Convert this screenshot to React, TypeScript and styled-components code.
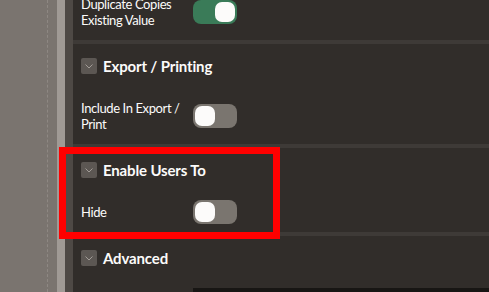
import React from "react";
import styled, { createGlobalStyle } from "styled-components";

const Global = createGlobalStyle`
  html, body { margin: 0; padding: 0; background: #312d2a; overflow: hidden; }
  body { font-family: Lato, "Noto Sans", sans-serif; }
`;

const Page = styled.div`
  display: flex;
  width: 489px;
  height: 292px;
  overflow: hidden;
  background: #312d2a;
`;

const Gutter = styled.div`
  width: 57px;
  flex: none;
  background: #7a746f;
  display: flex;
`;

const GutterDots = styled.div`
  width: 47px;
  border-right: 1px dashed #8e8883;
`;

const Strip = styled.div<{ $tone: string }>`
  width: 8px;
  flex: none;
  background: ${(p) => p.$tone};
`;

const Panel = styled.div`
  flex: 1;
  display: flex;
  flex-direction: column;
  color: #fcfbfa;
`;

const Section = styled.section<{ $top?: number; $bottom?: number; $marked?: boolean }>`
  position: relative;
  padding: ${(p) => p.$top ?? 14}px 0 ${(p) => p.$bottom ?? 12}px 8px;
  display: flex;
  flex-direction: column;
  ${(p) =>
    p.$marked &&
    `
    &::after {
      content: "";
      position: absolute;
      top: -1px;
      left: -14px;
      width: 207px;
      height: 78px;
      border: 7px solid #ff0000;
      pointer-events: none;
    }
  `}
`;

const Divider = styled.div`
  height: 4px;
  flex: none;
  background: #3e3a37;
`;

const Heading = styled.div`
  display: flex;
  align-items: center;
  gap: 6px;
  height: 16px;
  font-size: 15px;
  font-weight: 700;
  letter-spacing: -0.15px;
`;

const ChevronBox = styled.span`
  width: 16px;
  height: 16px;
  border-radius: 2px;
  background: #5c5753;
  display: inline-flex;
  flex: none;
`;

const Row = styled.div<{ $gap?: number }>`
  display: flex;
  align-items: center;
  margin-top: ${(p) => p.$gap ?? 0}px;
`;

const Label = styled.div`
  width: 112px;
  flex: none;
  font-size: 13px;
  line-height: 16px;
  letter-spacing: -0.4px;
`;

const Track = styled.div<{ $on?: boolean }>`
  width: 44px;
  height: 24px;
  box-sizing: border-box;
  border-radius: 8px;
  padding: 2px;
  display: flex;
  justify-content: ${(p) => (p.$on ? "flex-end" : "flex-start")};
  background: ${(p) => (p.$on ? "#3a7b58" : "#7a756f")};
`;

const Knob = styled.div`
  width: 20px;
  height: 20px;
  border-radius: 7px;
  background: #fcfbfa;
`;

const DarkField = styled.div`
  flex: 1;
  height: 24px;
  background: #181614;
`;

const Chevron = () => (
  <ChevronBox>
    <svg width="16" height="16" viewBox="0 0 16 16">
      <path d="M4.5 6.5 L8 10 L11.5 6.5" fill="none" stroke="#a29c97" strokeWidth="1" />
    </svg>
  </ChevronBox>
);

const Toggle = ({ on }: { on?: boolean }) => (
  <Track $on={on}>
    <Knob />
  </Track>
);

export default function App() {
  return (
    <Page>
      <Global />
      <Gutter>
        <GutterDots />
      </Gutter>
      <Strip $tone="#a09a95" />
      <Strip $tone="#4e4945" />
      <Panel>
        <Section $top={0} $bottom={12} style={{ marginTop: -4 }}>
          <Row>
            <Label>Duplicate Copies Existing Value</Label>
            <Toggle on />
          </Row>
        </Section>
        <Divider />
        <Section $bottom={12}>
          <Heading>
            <Chevron />
            Export / Printing
          </Heading>
          <Row $gap={26}>
            <Label>Include In Export / Print</Label>
            <Toggle />
          </Row>
        </Section>
        <Divider />
        <Section $bottom={8} $marked>
          <Heading>
            <Chevron />
            Enable Users To
          </Heading>
          <Row $gap={22}>
            <Label>Hide</Label>
            <Toggle />
          </Row>
        </Section>
        <Divider />
        <Section $bottom={0}>
          <Heading>
            <Chevron />
            Advanced
          </Heading>
          <Row $gap={22}>
            <Label />
            <DarkField />
          </Row>
        </Section>
      </Panel>
    </Page>
  );
}
